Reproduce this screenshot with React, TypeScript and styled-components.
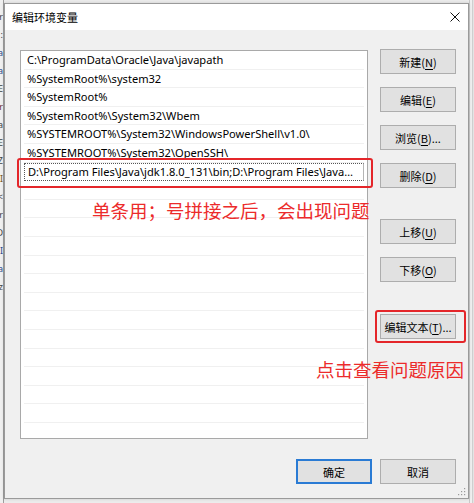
import React from "react";
import styled, { createGlobalStyle } from "styled-components";

const GlobalStyle = createGlobalStyle`
  html, body {
    margin: 0;
    padding: 0;
    width: 474px;
    height: 503px;
    overflow: hidden;
    background: #e9e9e9;
  }
  #root { width: 474px; height: 503px; }
  * { box-sizing: border-box; }
`;

const UI_FONT = `"Noto Sans", "Noto Sans CJK SC", sans-serif`;
const CJK_FONT = `"Noto Sans CJK SC", "Noto Sans", sans-serif`;

const Desktop = styled.div`
  display: flex;
  width: 474px;
  height: 503px;
  background: #ececec;
  font-family: ${UI_FONT};
`;

const BackWindowLeft = styled.div`
  width: 4px;
  height: 100%;
  background: #f0f0f0;
  border-right: 1px solid #9d9d9d;
  overflow: hidden;
  display: flex;
  flex-direction: column;
  align-items: flex-end;
  padding-top: 12px;
  gap: 8px;
  font-size: 9px;
  line-height: 10px;
  color: #333;
`;

const Frag = styled.span<{ $color?: string }>`
  display: block;
  white-space: nowrap;
  color: ${(p) => p.$color || "#444"};
`;

const BackWindowRight = styled.div`
  flex: 1;
  height: 100%;
  background: #f0f0f0;
  border-left: 1px solid #c8c8c8;
  display: flex;
  justify-content: flex-end;
`;

const RightRail = styled.div`
  width: 2px;
  height: 100%;
  border-left: 1px solid #cfcfcf;
  background: #e4e4e4;
`;

const DialogArea = styled.div`
  padding-top: 3px;
`;

const Dialog = styled.div`
  position: relative;
  width: 465px;
  height: 496px;
  border: 1px solid #9a9a9a;
  background: #f0f0f0;
  display: flex;
  flex-direction: column;
  box-shadow: 0 0 3px rgba(0, 0, 0, 0.15);
`;

const TitleBar = styled.div`
  height: 26px;
  background: #ffffff;
  display: flex;
  align-items: center;
  justify-content: space-between;
  padding: 0 8px 0 7px;
`;

const Title = styled.span`
  font-family: ${CJK_FONT};
  font-size: 11px;
  color: #000;
`;

const CloseIcon = styled.svg`
  width: 10px;
  height: 10px;
  display: block;
`;

const Body = styled.div`
  position: relative;
  flex: 1;
  display: flex;
  flex-direction: column;
  padding: 20px 12px 13px 15px;
`;

const Main = styled.div`
  display: flex;
  gap: 12px;
  align-items: flex-start;
`;

const ListBox = styled.div`
  width: 348px;
  height: 389px;
  border: 1px solid #a9a9a9;
  background: #ffffff;
  overflow: hidden;
`;

const Row = styled.div<{ $editing?: boolean }>`
  position: relative;
  height: 18.6px;
  margin: 0 3px;
  padding: 0 0 0 3px;
  border-bottom: 1px solid #f0f0f0;
  font-family: ${UI_FONT};
  font-size: 11.1px;
  line-height: 18px;
  color: #000;
  white-space: nowrap;
  overflow: hidden;
  text-overflow: ellipsis;
  ${(p) =>
    p.$editing
      ? `
    padding-right: 6px;
    border: 1px dotted #555;
    border-right: 1px solid #b5b5b5;
    line-height: 16px;
  `
      : ""}
`;

const ButtonCol = styled.div`
  width: 76px;
  display: flex;
  flex-direction: column;
  margin-top: -1px;
`;

const Btn = styled.button<{ $gap?: number; $default?: boolean }>`
  width: 76px;
  height: 25px;
  margin-top: ${(p) => p.$gap ?? 0}px;
  padding: 0;
  background: #e1e1e1;
  border: ${(p) => (p.$default ? "2px solid #2a7bd4" : "1px solid #adadad")};
  font-family: ${CJK_FONT};
  font-size: 11px;
  color: #000;
  display: flex;
  align-items: center;
  justify-content: center;
  cursor: default;
`;

const Key = styled.span`
  text-decoration: underline;
  text-underline-offset: 2px;
`;

const Footer = styled.div`
  margin-top: 20px;
  display: flex;
  justify-content: flex-end;
  gap: 8px;
`;

const Highlight = styled.div<{ $l: number; $t: number; $w: number; $h: number }>`
  position: absolute;
  left: ${(p) => p.$l}px;
  top: ${(p) => p.$t}px;
  width: ${(p) => p.$w}px;
  height: ${(p) => p.$h}px;
  border: 2px solid #e4262a;
  border-radius: 3px;
  pointer-events: none;
`;

const Note = styled.div<{ $l: number; $t: number }>`
  position: absolute;
  left: ${(p) => p.$l}px;
  top: ${(p) => p.$t}px;
  font-family: ${CJK_FONT};
  font-size: 18.5px;
  line-height: 22px;
  color: #ec2b2b;
  white-space: nowrap;
  pointer-events: none;
`;

const Grip = styled.svg`
  position: absolute;
  right: 2px;
  bottom: 2px;
  width: 8px;
  height: 8px;
`;

const paths = [
  "C:\\ProgramData\\Oracle\\Java\\javapath",
  "%SystemRoot%\\system32",
  "%SystemRoot%",
  "%SystemRoot%\\System32\\Wbem",
  "%SYSTEMROOT%\\System32\\WindowsPowerShell\\v1.0\\",
  "%SYSTEMROOT%\\System32\\OpenSSH\\",
];

const editing =
  "D:\\Program Files\\Java\\jdk1.8.0_131\\bin;D:\\Program Files\\Java\\jre1.8.0_131\\bin";

export default function App() {
  const empty = Array.from({ length: 14 });
  return (
    <>
      <GlobalStyle />
      <Desktop>
        <BackWindowLeft>
          <Frag>r</Frag>
          <Frag>:</Frag>
          <Frag $color="#2b4a8a">a</Frag>
          <Frag $color="#2b4a8a">a</Frag>
          <Frag>E</Frag>
          <Frag $color="#6b2b2b">r</Frag>
          <Frag>a</Frag>
          <Frag>E</Frag>
          <Frag>Z</Frag>
          <Frag $color="#7a5a1a">I</Frag>
          <Frag>&lt;</Frag>
          <Frag>r</Frag>
          <Frag>D</Frag>
          <Frag $color="#2b4a8a">I</Frag>
          <Frag $color="#2b4a8a">a</Frag>
          <Frag>z</Frag>
        </BackWindowLeft>
        <DialogArea>
          <Dialog>
            <TitleBar>
              <Title>编辑环境变量</Title>
              <CloseIcon viewBox="0 0 10 10">
                <path d="M0.5 0.5 L9.5 9.5 M9.5 0.5 L0.5 9.5" stroke="#111" strokeWidth="1" fill="none" />
              </CloseIcon>
            </TitleBar>
            <Body>
              <Main>
                <ListBox>
                  {paths.map((p) => (
                    <Row key={p}>{p}</Row>
                  ))}
                  <Row $editing>{editing}</Row>
                  {empty.map((_, i) => (
                    <Row key={"e" + i} />
                  ))}
                </ListBox>
                <ButtonCol>
                  <Btn>
                    新建(<Key>N</Key>)
                  </Btn>
                  <Btn $gap={13}>
                    编辑(<Key>E</Key>)
                  </Btn>
                  <Btn $gap={13}>
                    浏览(<Key>B</Key>)...
                  </Btn>
                  <Btn $gap={13}>
                    删除(<Key>D</Key>)
                  </Btn>
                  <Btn $gap={31}>
                    上移(<Key>U</Key>)
                  </Btn>
                  <Btn $gap={13}>
                    下移(<Key>O</Key>)
                  </Btn>
                  <Btn $gap={32}>
                    编辑文本(<Key>T</Key>)...
                  </Btn>
                </ButtonCol>
              </Main>
              <Footer>
                <Btn $default>确定</Btn>
                <Btn>取消</Btn>
              </Footer>
              <Highlight $l={12} $t={128} $w={356} $h={30} />
              <Note $l={87} $t={169}>单条用；号拼接之后，会出现问题</Note>
              <Highlight $l={370} $t={280} $w={91} $h={33} />
              <Note $l={311} $t={328}>点击查看问题原因</Note>
            </Body>
            <Grip viewBox="0 0 8 8">
              <rect x="6" y="0" width="1.2" height="1.2" fill="#999" />
              <rect x="3" y="3" width="1.2" height="1.2" fill="#999" />
              <rect x="6" y="3" width="1.2" height="1.2" fill="#999" />
              <rect x="0" y="6" width="1.2" height="1.2" fill="#999" />
              <rect x="3" y="6" width="1.2" height="1.2" fill="#999" />
              <rect x="6" y="6" width="1.2" height="1.2" fill="#999" />
            </Grip>
          </Dialog>
        </DialogArea>
        <BackWindowRight>
          <RightRail />
        </BackWindowRight>
      </Desktop>
    </>
  );
}
